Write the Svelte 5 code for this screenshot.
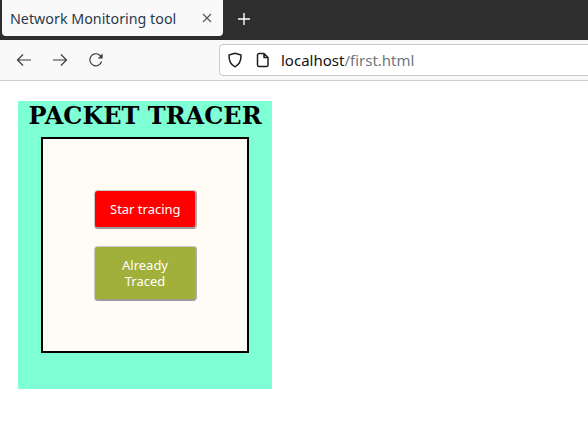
<script>
  const title = 'Network Monitoring tool';
</script>

<div class="window">
  <header class="tabbar">
    <div class="tab">
      <span class="tab-title">{title}</span>
      <svg class="close" width="10" height="10" viewBox="0 0 10 10"><path d="M1 1l8 8M9 1l-8 8" /></svg>
    </div>
    <svg class="plus" width="14" height="14" viewBox="0 0 14 14"><path d="M7 1v12M1 7h12" /></svg>
  </header>
  <nav class="toolbar">
    <svg class="nav back" width="16" height="14" viewBox="0 0 16 14"><path d="M15 7H1.500M7 1.500L1.500 7 7 12.500" /></svg>
    <svg class="nav forward" width="16" height="14" viewBox="0 0 16 14"><path d="M1 7h13.500M9 1.500L14.500 7 9 12.500" /></svg>
    <svg class="nav reload" width="16" height="16" viewBox="0 0 16 16"><path d="M13.600 9.500A6 6 0 1 1 11.500 3l2 1.700" /><path class="solid" d="M14.600 1.600v4.800H9.800z" /></svg>
    <div class="urlbar">
      <svg class="shield" width="16" height="16" viewBox="0 0 16 16"><path d="M8 1.200l6 1.800c.2 5.500-1.800 9.700-6 11.800C3.800 12.700 1.800 8.500 2 3z" /></svg>
      <svg class="page-icon" width="14" height="16" viewBox="0 0 14 16"><path d="M3 1.500h5l4 4V13a1.500 1.500 0 0 1-1.500 1.500h-7.500A1.500 1.500 0 0 1 1.500 13V3A1.500 1.500 0 0 1 3 1.500zM8 1.500V5.500h4" /></svg>
      <span class="url"><span class="host">localhost</span>/first.html</span>
    </div>
  </nav>
  <main class="content">
    <section class="panel">
      <h1>PACKET TRACER</h1>
      <div class="box">
        <button class="red">Star tracing</button>
        <button class="olive">Already Traced</button>
      </div>
    </section>
  </main>
</div>

<style>
  :global(body) {
    margin: 0;
    background: #fff;
    overflow: hidden;
  }
  .window {
    width: 588px;
    height: 424px;
    overflow: hidden;
    font-family: "Noto Sans", sans-serif;
  }
  .tabbar {
    height: 40px;
    box-sizing: border-box;
    background: #2f2e2e;
    padding-left: 2px;
    display: flex;
    align-items: flex-start;
  }
  .tab {
    width: 221px;
    height: 36px;
    flex: none;
    box-sizing: border-box;
    background: #f9f9fa;
    border-radius: 0 0 4px 4px;
    padding: 0 11px 0 8px;
    display: flex;
    align-items: center;
    justify-content: space-between;
  }
  .tab-title {
    font-size: 14.300px;
    color: #2b3a4a;
  }
  .close path {
    fill: none;
    stroke: #555;
    stroke-width: 1.100;
  }
  .plus {
    flex: none;
    margin: 12px 0 0 14px;
  }
  .plus path {
    fill: none;
    stroke: #fff;
    stroke-width: 1.400;
  }
  .toolbar {
    height: 41px;
    box-sizing: border-box;
    background: #f9f9fa;
    border-bottom: 1px solid #cfcfd1;
    display: flex;
    align-items: center;
    padding-left: 16px;
  }
  .nav {
    flex: none;
  }
  .nav path {
    fill: none;
    stroke: #3a3a3a;
    stroke-width: 1.200;
  }
  .nav path.solid {
    fill: #3a3a3a;
    stroke: none;
  }
  .forward {
    margin-left: 20px;
  }
  .reload {
    margin-left: 20px;
  }
  .urlbar {
    margin-left: 115px;
    width: 400px;
    height: 32px;
    flex: none;
    box-sizing: border-box;
    background: #fff;
    border: 1px solid #c9c9cb;
    border-radius: 4px;
    display: flex;
    align-items: center;
    padding-left: 7px;
  }
  .shield,
  .page-icon {
    flex: none;
  }
  .shield path,
  .page-icon path {
    fill: none;
    stroke: #1f1f1f;
    stroke-width: 1.500;
    stroke-linejoin: round;
  }
  .page-icon {
    margin-left: 13px;
  }
  .url {
    margin-left: 11px;
    font-size: 15px;
    color: #70777f;
  }
  .host {
    color: #111;
  }
  .content {
    padding: 20px 0 0 18px;
  }
  .panel {
    width: 254px;
    height: 288px;
    box-sizing: border-box;
    background: #7fffd4;
    padding-top: 1px;
  }
  h1 {
    margin: 0;
    font-family: "DejaVu Serif", serif;
    font-weight: 700;
    font-size: 24px;
    line-height: 28px;
    text-align: center;
    color: #000;
    white-space: nowrap;
  }
  .box {
    width: 208px;
    height: 216px;
    box-sizing: border-box;
    margin: 7px 0 0 23px;
    background: #fffbf5;
    border: 2px solid #000;
    padding: 51px 0 0 51px;
    display: flex;
    flex-direction: column;
    gap: 17px;
  }
  button {
    width: 103px;
    box-sizing: border-box;
    border-style: solid;
    border-width: 1px 2px 2px 1px;
    border-color: #c8c8c8 #a9a9a9 #9c9c9c #c8c8c8;
    border-radius: 4px;
    color: #fff;
    font-family: "Noto Sans", sans-serif;
    font-size: 13px;
    line-height: 16px;
    padding: 0 15px 1px 15px;
  }
  .red {
    height: 39px;
    background: #f00;
    white-space: nowrap;
  }
  .olive {
    height: 55px;
    background: #a0b03b;
  }
</style>
